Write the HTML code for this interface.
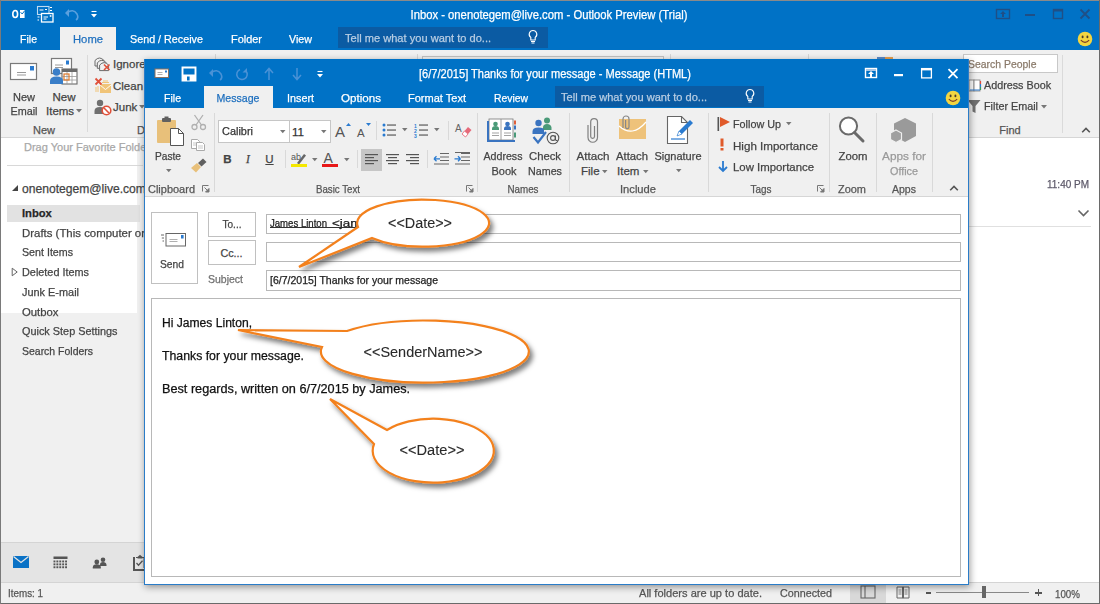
<!DOCTYPE html>
<html><head><meta charset="utf-8"><title>Outlook</title>
<style>
*{margin:0;padding:0;box-sizing:border-box}
html,body{width:1100px;height:604px;overflow:hidden}
body{position:relative;font-family:"Liberation Sans", sans-serif;background:#f0f0f0}
.a{position:absolute;white-space:nowrap;-webkit-text-stroke:0.25px currentColor}
svg.a{overflow:visible}
</style></head><body>
<div class="a" style="left:0px;top:0px;width:1100px;height:604px;background:#f0f0f0"></div>
<div class="a" style="left:1px;top:1px;width:1098px;height:49px;background:#0072c6"></div>
<div class="a" style="left:0px;top:0px;width:1100px;height:1px;background:#8a8a8a"></div>
<div class="a" style="left:0px;top:603px;width:1100px;height:1px;background:#6a6a6a"></div>
<div class="a" style="left:0px;top:0px;width:1px;height:604px;background:#7a7a7a"></div>
<div class="a" style="left:1099px;top:0px;width:1px;height:604px;background:#6a6a6a"></div>
<svg class="a" style="left:10px;top:8px;" width="17" height="12" viewBox="0 0 17 12"><ellipse cx="5.2" cy="6" rx="2.4" ry="3.5" fill="none" stroke="#fff" stroke-width="1.6"/><rect x="10" y="2" width="4.6" height="8" fill="#fff"/><path d="M10.6 4.2l1.6 1.8l2.4-3.2" fill="none" stroke="#0072c6" stroke-width="1"/></svg>
<svg class="a" style="left:36px;top:5px;" width="18" height="18" viewBox="0 0 18 18"><g fill="none" stroke="#fff"><rect x="1.5" y="1.5" width="11.5" height="8" stroke-opacity=".75" stroke-width="1.1"/><rect x="5.5" y="8.5" width="11.5" height="8.5" fill="#0072c6" stroke-width="1.3"/><path d="M3.5 5h4M9 4.5h2M7.5 12h4.5M7.5 14h3" stroke-width="1"/></g><path d="M14 2.5h2M14 5.5h2M1.5 12h2M1.5 15h1.5" stroke="#fff" stroke-width="1.2"/><rect x="13.8" y="10.2" width="1.6" height="1.6" fill="#fff"/></svg>
<svg class="a" style="left:64px;top:7px;" width="16" height="14" viewBox="0 0 16 14"><path d="M3 6 q6 -5 10 1 q2 4 -1 6" fill="none" stroke="#5aa0de" stroke-width="1.6"/><path d="M1 6 l4 -4 v8z" fill="#5aa0de"/></svg>
<svg class="a" style="left:90px;top:9px;" width="8" height="10" viewBox="0 0 8 10"><path d="M1.5 2.5h5" stroke="#fff" stroke-width="1.1"/><path d="M1 5h6l-3 3.5z" fill="#fff"/></svg>
<div class="a" style="left:348.5px;width:400px;text-align:center;top:8.80px;font-size:12px;line-height:12px;color:#fff;transform:scaleX(0.938);transform-origin:50% 0;">Inbox - onenotegem@live.com - Outlook Preview (Trial)</div>
<svg class="a" style="left:995px;top:8px;" width="16" height="12" viewBox="0 0 16 12"><rect x="1.5" y="1.5" width="13" height="9" fill="none" stroke="#1f4f86" stroke-width="1.4"/><path d="M8 3l-3 3h2v3h2v-3h2z" fill="#1f4f86"/></svg>
<svg class="a" style="left:1024px;top:13px;" width="12" height="4" viewBox="0 0 12 4"><rect x="1" y="1" width="10" height="2" fill="#1f4f86"/></svg>
<svg class="a" style="left:1052px;top:8px;" width="12" height="12" viewBox="0 0 12 12"><rect x="1.5" y="1.5" width="9" height="9" fill="none" stroke="#1f4f86" stroke-width="1.4"/><rect x="1" y="1" width="10" height="2.5" fill="#1f4f86"/></svg>
<svg class="a" style="left:1079px;top:8px;" width="12" height="12" viewBox="0 0 12 12"><path d="M1.5 1.5l9 9M10.5 1.5l-9 9" stroke="#1f4f86" stroke-width="1.8"/></svg>
<div class="a" style="left:20px;top:33.90px;font-size:11.8px;line-height:11.8px;color:#fff;transform:scaleX(0.894);transform-origin:0 0;">File</div>
<div class="a" style="left:60px;top:27px;width:56px;height:23px;background:#f0f0f0"></div>
<div class="a" style="left:-112px;width:400px;text-align:center;top:33.90px;font-size:11.8px;line-height:11.8px;color:#1e6fbe;transform:scaleX(0.953);transform-origin:50% 0;">Home</div>
<div class="a" style="left:130px;top:33.90px;font-size:11.8px;line-height:11.8px;color:#fff;transform:scaleX(0.912);transform-origin:0 0;">Send / Receive</div>
<div class="a" style="left:231px;top:33.90px;font-size:11.8px;line-height:11.8px;color:#fff;transform:scaleX(0.927);transform-origin:0 0;">Folder</div>
<div class="a" style="left:289px;top:33.90px;font-size:11.8px;line-height:11.8px;color:#fff;transform:scaleX(0.907);transform-origin:0 0;">View</div>
<div class="a" style="left:338px;top:27px;width:210px;height:21px;background:#0b5ba3"></div>
<div class="a" style="left:345px;top:33.05px;font-size:11.5px;line-height:11.5px;color:#b8cde3;transform:scaleX(0.964);transform-origin:0 0;">Tell me what you want to do...</div>
<svg class="a" style="left:528px;top:29px;" width="10" height="16" viewBox="0 0 10 16"><path d="M5 1.5a3.8 3.8 0 0 0-2.2 6.9v2.6h4.4v-2.6A3.8 3.8 0 0 0 5 1.5z" fill="none" stroke="#fff" stroke-width="1.1"/><path d="M3 12.5h4M3.5 14h3" stroke="#fff" stroke-width="1"/></svg>
<svg class="a" style="left:1077px;top:31px;" width="16" height="16" viewBox="0 0 16 16"><circle cx="8" cy="8" r="7.3" fill="#f3d540"/><ellipse cx="5.6" cy="5.9" rx="0.95" ry="1.3" fill="#4a3a2a"/><ellipse cx="10.4" cy="5.9" rx="0.95" ry="1.3" fill="#4a3a2a"/><path d="M3.8 9.2q4.2 4.2 8.4 0" fill="none" stroke="#7a3a2a" stroke-width="1.1"/></svg>
<div class="a" style="left:1px;top:50px;width:1098px;height:87px;background:#f0f0f0"></div>
<div class="a" style="left:1px;top:137px;width:1098px;height:1px;background:#d6d6d6"></div>
<svg class="a" style="left:9px;top:62px;" width="30" height="19" viewBox="0 0 30 19"><rect x="1.5" y="1.5" width="26" height="16" fill="#fff" stroke="#7a7a7a" stroke-width="1.2"/><rect x="21" y="4" width="4" height="4.5" fill="#2a7bd0"/><path d="M8 10.5h9M8 13h9" stroke="#9a9a9a" stroke-width="1"/></svg>
<div class="a" style="left:-176px;width:400px;text-align:center;top:92.05px;font-size:11.5px;line-height:11.5px;color:#444444;transform:scaleX(0.956);transform-origin:50% 0;">New</div>
<div class="a" style="left:-176px;width:400px;text-align:center;top:106.05px;font-size:11.5px;line-height:11.5px;color:#444444;transform:scaleX(0.939);transform-origin:50% 0;">Email</div>
<svg class="a" style="left:49px;top:57px;" width="30" height="29" viewBox="0 0 30 29"><rect x="2.5" y="1.5" width="20" height="15" fill="#fff" stroke="#7a7a7a" stroke-width="1.2"/><rect x="17" y="3.5" width="3" height="4" fill="#2a7bd0"/><path d="M6 8h8M6 10.5h8" stroke="#9a9a9a"/><rect x="13" y="12" width="15" height="15" fill="#fff" stroke="#6a6a6a" stroke-width="1.1"/><rect x="13" y="12" width="15" height="3" fill="#6a6a6a"/><path d="M13 19.5h15M13 23h15M18 15v12M23 15v12" stroke="#999" stroke-width=".8"/><rect x="15" y="17" width="5" height="6" fill="none" stroke="#e07a2a" stroke-width="1.2"/><circle cx="7.5" cy="15" r="3.8" fill="#3a7ec8"/><path d="M1 27v-3q0-4.5 6.5-4.5t6.5 4.5v3z" fill="#3a7ec8"/></svg>
<div class="a" style="left:-136px;width:400px;text-align:center;top:92.05px;font-size:11.5px;line-height:11.5px;color:#444444;transform-origin:50% 0;">New</div>
<div class="a" style="left:46px;top:106.05px;font-size:11.5px;line-height:11.5px;color:#444444;transform-origin:0 0;">Items</div>
<svg class="a" style="left:76px;top:109px;" width="6" height="4" viewBox="0 0 6 4"><path d="M0 0h6l-3 3.5z" fill="#777"/></svg>
<div class="a" style="left:-156px;width:400px;text-align:center;top:125.30px;font-size:11px;line-height:11px;color:#555;transform-origin:50% 0;">New</div>
<div class="a" style="left:87px;top:55px;width:1px;height:77px;background:#dadada"></div>
<svg class="a" style="left:94px;top:55px;" width="18" height="17" viewBox="0 0 18 17"><path d="M1.0 11.0V5.5Q5.5 0.5 10.0 5.5V11.0z" fill="#f0f0f0" stroke="#6a6a6a" stroke-width="1"/><path d="M3.3 13.3V7.8Q7.8 2.8 12.3 7.8V13.3z" fill="#f0f0f0" stroke="#6a6a6a" stroke-width="1"/><path d="M5.6 15.6V10.1Q10.1 5.1 14.6 10.1V15.6z" fill="#f0f0f0" stroke="#6a6a6a" stroke-width="1"/><path d="M10 9.5l5.5 5.5M15.5 9.5l-5.5 5.5" stroke="#e0503a" stroke-width="1.6"/></svg>
<div class="a" style="left:113px;top:59.05px;font-size:11.5px;line-height:11.5px;color:#444444;transform-origin:0 0;">Ignore</div>
<svg class="a" style="left:94px;top:77px;" width="18" height="18" viewBox="0 0 18 18"><rect x="6" y="7" width="11" height="9" fill="#f0c478"/><path d="M6 8l5.5 4.5l5.5-4.5" fill="none" stroke="#fff" stroke-width=".9"/><path d="M8 5.5h7M9 4h5" stroke="#f0c478" stroke-width="1"/><path d="M1.5 1.5l6 6M7.5 1.5l-6 6" stroke="#e0503a" stroke-width="1.8"/><path d="M2 10v5M4 9v6" stroke="#f0c478" stroke-width="1"/></svg>
<div class="a" style="left:113px;top:81.05px;font-size:11.5px;line-height:11.5px;color:#444444;transform-origin:0 0;">Clean</div>
<svg class="a" style="left:94px;top:99px;" width="18" height="17" viewBox="0 0 18 17"><circle cx="6" cy="4" r="3.2" fill="#707070"/><path d="M0.5 15v-3q0-4 5.5-4t5.5 4v3z" fill="#707070"/><circle cx="12.5" cy="11.5" r="4.3" fill="#fff" stroke="#e0503a" stroke-width="1.6"/><path d="M9.8 8.8l5.4 5.4" stroke="#e0503a" stroke-width="1.6"/></svg>
<div class="a" style="left:113px;top:102.05px;font-size:11.5px;line-height:11.5px;color:#444444;transform-origin:0 0;">Junk</div>
<svg class="a" style="left:139px;top:105px;" width="6" height="4" viewBox="0 0 6 4"><path d="M0 0h6l-3 3.5z" fill="#777"/></svg>
<div class="a" style="left:137px;top:125.30px;font-size:11px;line-height:11px;color:#555;transform-origin:0 0;">D</div>
<div class="a" style="left:422px;top:56px;width:242px;height:1px;background:#c2c2c2"></div>
<div class="a" style="left:422px;top:56px;width:1px;height:4px;background:#c2c2c2"></div>
<div class="a" style="left:663px;top:56px;width:1px;height:4px;background:#c2c2c2"></div>
<div class="a" style="left:215px;top:54px;width:1px;height:6px;background:#d6d6d6"></div>
<div class="a" style="left:417px;top:54px;width:1px;height:6px;background:#d6d6d6"></div>
<div class="a" style="left:670px;top:54px;width:1px;height:6px;background:#d6d6d6"></div>
<div class="a" style="left:808px;top:54px;width:1px;height:6px;background:#d6d6d6"></div>
<div class="a" style="left:877px;top:57px;width:8px;height:3px;background:#5a8ac8"></div>
<div class="a" style="left:885px;top:57px;width:8px;height:3px;background:#e8a050"></div>
<div class="a" style="left:963px;top:54px;width:95px;height:19px;background:#fff;border:1px solid #c8c8c8"></div>
<div class="a" style="left:967.5px;top:58.70px;font-size:11.2px;line-height:11.2px;color:#8a7a6a;transform:scaleX(0.933);transform-origin:0 0;">Search People</div>
<svg class="a" style="left:968px;top:79px;" width="14" height="13" viewBox="0 0 14 13"><rect x="1" y="1" width="5" height="11" fill="#fff" stroke="#888" stroke-width=".9"/><rect x="6" y="1" width="6" height="11" fill="#fff" stroke="#888" stroke-width=".9"/><path d="M12.5 2v3" stroke="#e04a3a" stroke-width="1.2"/><path d="M12.5 5v3" stroke="#2a7bd0" stroke-width="1.2"/><path d="M12.5 8v3" stroke="#3a9a5a" stroke-width="1.2"/><path d="M2 11h10" stroke="#2a7bd0"/></svg>
<div class="a" style="left:984px;top:80.05px;font-size:11.5px;line-height:11.5px;color:#444444;transform:scaleX(0.936);transform-origin:0 0;">Address Book</div>
<svg class="a" style="left:967px;top:99px;" width="14" height="15" viewBox="0 0 14 15"><path d="M0.5 1h13l-5 6v7l-3-1.5v-5.5z" fill="#707070"/></svg>
<div class="a" style="left:984px;top:101.05px;font-size:11.5px;line-height:11.5px;color:#444444;transform:scaleX(0.939);transform-origin:0 0;">Filter Email</div>
<svg class="a" style="left:1040.5px;top:105px;" width="6" height="4" viewBox="0 0 6 4"><path d="M0 0h6l-3 3.5z" fill="#777"/></svg>
<div class="a" style="left:810px;width:400px;text-align:center;top:125.30px;font-size:11px;line-height:11px;color:#555;transform-origin:50% 0;">Find</div>
<div class="a" style="left:1062px;top:55px;width:1px;height:78px;background:#dadada"></div>
<svg class="a" style="left:1081px;top:126px;" width="10" height="8" viewBox="0 0 10 8"><path d="M1.2 6.2l3.8-3.8l3.8 3.8" fill="none" stroke="#555" stroke-width="1.6"/></svg>
<div class="a" style="left:1px;top:138px;width:143px;height:404px;background:#f0f0f0"></div>
<div class="a" style="left:1px;top:138px;width:136px;height:175px;background:#fff"></div>
<div class="a" style="left:24px;top:142.30px;font-size:11px;line-height:11px;color:#a8a8a8;transform-origin:0 0;">Drag Your Favorite Folders Here</div>
<div class="a" style="left:7px;top:165px;width:136px;height:1px;background:#d8d8d8"></div>
<svg class="a" style="left:11px;top:184px;" width="8" height="8" viewBox="0 0 8 8"><path d="M7 1v6h-6z" fill="#444"/></svg>
<div class="a" style="left:22px;top:183.25px;font-size:12.1px;line-height:12.1px;color:#444444;transform-origin:0 0;">onenotegem@live.com</div>
<div class="a" style="left:7px;top:205px;width:133px;height:17px;background:#e2e2e2"></div>
<div class="a" style="left:22px;top:208.00px;font-size:11.2px;line-height:11.2px;color:#262626;transform-origin:0 0;font-weight:bold">Inbox</div>
<div class="a" style="left:22px;top:227.70px;font-size:11.2px;line-height:11.2px;color:#444444;transform:scaleX(1.02);transform-origin:0 0;">Drafts (This computer only)</div>
<div class="a" style="left:22px;top:247.45px;font-size:11.2px;line-height:11.2px;color:#444444;transform:scaleX(0.954);transform-origin:0 0;">Sent Items</div>
<div class="a" style="left:22px;top:267.20px;font-size:11.2px;line-height:11.2px;color:#444444;transform:scaleX(0.971);transform-origin:0 0;">Deleted Items</div>
<div class="a" style="left:22px;top:286.95px;font-size:11.2px;line-height:11.2px;color:#444444;transform:scaleX(0.975);transform-origin:0 0;">Junk E-mail</div>
<div class="a" style="left:22px;top:306.70px;font-size:11.2px;line-height:11.2px;color:#444444;transform:scaleX(1.012);transform-origin:0 0;">Outbox</div>
<div class="a" style="left:22px;top:326.45px;font-size:11.2px;line-height:11.2px;color:#444444;transform:scaleX(0.972);transform-origin:0 0;">Quick Step Settings</div>
<div class="a" style="left:22px;top:346.20px;font-size:11.2px;line-height:11.2px;color:#444444;transform:scaleX(0.936);transform-origin:0 0;">Search Folders</div>
<svg class="a" style="left:11px;top:267px;" width="7" height="10" viewBox="0 0 7 10"><path d="M1.2 1.2v7.6l5-3.8z" fill="none" stroke="#666" stroke-width="1"/></svg>
<div class="a" style="left:1px;top:542px;width:143px;height:1px;background:#d4d4d4"></div>
<div class="a" style="left:1px;top:543px;width:143px;height:39px;background:#e4e4e4"></div>
<div class="a" style="left:1px;top:582px;width:1098px;height:1px;background:#d4d4d4"></div>
<svg class="a" style="left:13px;top:555px;" width="16" height="14" viewBox="0 0 16 14"><rect x="0" y="1" width="16" height="12" fill="#0a72c6"/><path d="M0.5 1.5l7.5 6l7.5-6" fill="none" stroke="#e4e4e4" stroke-width="1.3"/></svg>
<svg class="a" style="left:53px;top:556px;" width="15" height="13" viewBox="0 0 15 13"><rect x="0.5" y="0.5" width="14" height="2.5" fill="#555"/><rect x="0.5" y="4.5" width="1.9" height="1.9" fill="#555"/><rect x="3.4" y="4.5" width="1.9" height="1.9" fill="#555"/><rect x="6.3" y="4.5" width="1.9" height="1.9" fill="#555"/><rect x="9.2" y="4.5" width="1.9" height="1.9" fill="#555"/><rect x="12.1" y="4.5" width="1.9" height="1.9" fill="#555"/><rect x="0.5" y="7.4" width="1.9" height="1.9" fill="#555"/><rect x="3.4" y="7.4" width="1.9" height="1.9" fill="#555"/><rect x="6.3" y="7.4" width="1.9" height="1.9" fill="#555"/><rect x="9.2" y="7.4" width="1.9" height="1.9" fill="#555"/><rect x="12.1" y="7.4" width="1.9" height="1.9" fill="#555"/><rect x="0.5" y="10.3" width="1.9" height="1.9" fill="#555"/><rect x="3.4" y="10.3" width="1.9" height="1.9" fill="#555"/><rect x="6.3" y="10.3" width="1.9" height="1.9" fill="#555"/><rect x="9.2" y="10.3" width="1.9" height="1.9" fill="#555"/><rect x="12.1" y="10.3" width="1.9" height="1.9" fill="#555"/></svg>
<svg class="a" style="left:92px;top:556px;" width="15" height="13" viewBox="0 0 15 13"><circle cx="4.8" cy="6" r="2.4" fill="#555"/><path d="M0.8 12.5v-1.2q0-3 4-3t4 3v1.2z" fill="#555"/><circle cx="11" cy="3.8" r="2.3" fill="#555"/><path d="M8 10v-1.2q0-2.8 3-2.8t3.5 2.8v1.2z" fill="#555"/></svg>
<svg class="a" style="left:132px;top:554px;" width="13" height="17" viewBox="0 0 13 17"><path d="M2 3v13h11" fill="none" stroke="#555" stroke-width="2"/><path d="M4 3.5h8v10.5" fill="none" stroke="#555" stroke-width="1"/><path d="M5.5 3l2.5-2.2l2.5 2.2v1.5h-5z" fill="#555"/><path d="M4.5 9l2 2.2l4-4.5" fill="none" stroke="#555" stroke-width="1.3"/></svg>
<div class="a" style="left:1px;top:583px;width:1098px;height:20px;background:#f0f0f0"></div>
<div class="a" style="left:8px;top:587.75px;font-size:10.5px;line-height:10.5px;color:#555;transform:scaleX(0.937);transform-origin:0 0;">Items: 1</div>
<div class="a" style="left:638.5px;top:588.20px;font-size:11.2px;line-height:11.2px;color:#555;transform:scaleX(0.989);transform-origin:0 0;">All folders are up to date.</div>
<div class="a" style="left:780px;top:588.20px;font-size:11.2px;line-height:11.2px;color:#555;transform:scaleX(0.961);transform-origin:0 0;">Connected</div>
<div class="a" style="left:850px;top:583px;width:36px;height:20px;background:#d8d8d8"></div>
<svg class="a" style="left:860px;top:585px;" width="16" height="14" viewBox="0 0 16 14"><rect x="1" y="1" width="14" height="12" fill="none" stroke="#666" stroke-width="1.1"/><path d="M5 1v12" stroke="#666" stroke-width="1.1"/></svg>
<svg class="a" style="left:896px;top:585px;" width="14" height="14" viewBox="0 0 14 14"><path d="M1 2h5.5v11h-5.5zM7.5 2h5.5v11h-5.5z" fill="none" stroke="#666" stroke-width="1"/><path d="M2.5 5h3M2.5 7h3M2.5 9h3M8.5 5h3M8.5 7h3M8.5 9h3M7 1v13" stroke="#666" stroke-width=".8"/></svg>
<div class="a" style="left:926px;top:592px;width:5px;height:2px;background:#555"></div>
<div class="a" style="left:936px;top:592px;width:93px;height:1px;background:#888"></div>
<div class="a" style="left:982px;top:586px;width:4px;height:12px;background:#666"></div>
<div class="a" style="left:1035px;top:592px;width:7px;height:1.5px;background:#555"></div>
<div class="a" style="left:1037.8px;top:589px;width:1.5px;height:7px;background:#555"></div>
<div class="a" style="left:1055px;top:588.55px;font-size:10.5px;line-height:10.5px;color:#555;transform:scaleX(0.931);transform-origin:0 0;">100%</div>
<div class="a" style="left:969px;top:138px;width:130px;height:444px;background:#fff"></div>
<div class="a" style="left:689px;width:400px;text-align:right;top:179.05px;font-size:10.5px;line-height:10.5px;color:#5e5a6a;transform:scaleX(0.951);transform-origin:100% 0;">11:40 PM</div>
<svg class="a" style="left:1077px;top:209px;" width="13" height="9" viewBox="0 0 13 9"><path d="M1.5 1.5l5 5l5-5" fill="none" stroke="#666" stroke-width="1.6"/></svg>
<div class="a" style="left:969px;top:226px;width:122px;height:1px;background:#e0e0e0"></div>
<div class="a" style="left:144px;top:59px;width:825px;height:526px;background:#fff;box-shadow:1px 2px 7px rgba(0,0,0,0.4)"></div>
<div class="a" style="left:144px;top:59px;width:825px;height:49px;background:#0072c6"></div>
<div class="a" style="left:144px;top:59px;width:1px;height:526px;background:#2a7cc8"></div>
<div class="a" style="left:968px;top:59px;width:1px;height:526px;background:#2a7cc8"></div>
<div class="a" style="left:144px;top:584px;width:825px;height:1px;background:#2a7cc8"></div>
<svg class="a" style="left:154px;top:68px;" width="16" height="11" viewBox="0 0 16 11"><rect x="1" y="1" width="13.5" height="8.5" fill="#fff" stroke="#8a7060" stroke-width="1"/><path d="M3.5 4.5h5M3.5 6.5h5" stroke="#999" stroke-width=".8"/><rect x="11" y="2.5" width="2" height="2" fill="#2a7bd0"/></svg>
<svg class="a" style="left:181px;top:66px;" width="16" height="16" viewBox="0 0 16 16"><path d="M1.5 1.5h13v13h-13z" fill="none" stroke="#fff" stroke-width="1.9"/><rect x="2" y="8.5" width="12" height="6" fill="#fff"/><rect x="6" y="10.5" width="2.6" height="4" fill="#0072c6"/></svg>
<svg class="a" style="left:208px;top:67px;" width="16" height="14" viewBox="0 0 16 14"><path d="M3 6 q6 -5 10 1 q2 4 -1 6" fill="none" stroke="#4a92d6" stroke-width="1.6"/><path d="M1 6 l4 -4 v8z" fill="#4a92d6"/></svg>
<svg class="a" style="left:235px;top:67px;" width="15" height="14" viewBox="0 0 15 14"><path d="M11 4a5.2 5.2 0 1 1-6-1.5" fill="none" stroke="#4a92d6" stroke-width="1.5"/><path d="M12 1v4.5h-4.5z" fill="#4a92d6"/></svg>
<svg class="a" style="left:264px;top:67px;" width="10" height="14" viewBox="0 0 10 14"><path d="M5 13V2M1 6l4-4.5l4 4.5" fill="none" stroke="#4a92d6" stroke-width="1.5"/></svg>
<svg class="a" style="left:292px;top:67px;" width="10" height="14" viewBox="0 0 10 14"><path d="M5 1v11M1 8l4 4.5l4-4.5" fill="none" stroke="#4a92d6" stroke-width="1.5"/></svg>
<svg class="a" style="left:316px;top:69px;" width="8" height="10" viewBox="0 0 8 10"><path d="M1.5 2.5h5" stroke="#fff" stroke-width="1.1"/><path d="M1 5h6l-3 3.5z" fill="#fff"/></svg>
<div class="a" style="left:354.5px;width:400px;text-align:center;top:68.30px;font-size:12px;line-height:12px;color:#fff;transform:scaleX(0.921);transform-origin:50% 0;">[6/7/2015] Thanks for your message - Message (HTML)</div>
<svg class="a" style="left:864px;top:67px;" width="14" height="12" viewBox="0 0 14 12"><rect x="1.5" y="1.5" width="11" height="9" fill="none" stroke="#fff" stroke-width="1.4"/><rect x="2" y="2" width="10" height="2" fill="#a8c8e8"/><path d="M7 4l-3 3h2v3h2v-3h2z" fill="#fff"/></svg>
<svg class="a" style="left:893px;top:73px;" width="12" height="4" viewBox="0 0 12 4"><rect x="1" y="1" width="9" height="2.2" fill="#fff"/></svg>
<svg class="a" style="left:920px;top:67px;" width="13" height="12" viewBox="0 0 13 12"><rect x="1.6" y="1.6" width="9.8" height="9.3" fill="none" stroke="#fff" stroke-width="1.3"/><rect x="1" y="1" width="11" height="2.4" fill="#fff"/></svg>
<svg class="a" style="left:947px;top:68px;" width="12" height="11" viewBox="0 0 12 11"><path d="M1.5 1.2l9 9M10.5 1.2l-9 9" stroke="#fff" stroke-width="1.8"/></svg>
<svg class="a" style="left:945px;top:90px;" width="16" height="16" viewBox="0 0 16 16"><circle cx="8" cy="8" r="7.3" fill="#f3d540"/><ellipse cx="5.6" cy="5.9" rx="0.95" ry="1.3" fill="#4a3a2a"/><ellipse cx="10.4" cy="5.9" rx="0.95" ry="1.3" fill="#4a3a2a"/><path d="M3.8 9.2q4.2 4.2 8.4 0" fill="none" stroke="#7a3a2a" stroke-width="1.1"/></svg>
<div class="a" style="left:164px;top:92.90px;font-size:11.8px;line-height:11.8px;color:#fff;transform:scaleX(0.894);transform-origin:0 0;">File</div>
<div class="a" style="left:204px;top:86px;width:69px;height:22px;background:#f0f0f0"></div>
<div class="a" style="left:37.5px;width:400px;text-align:center;top:92.90px;font-size:11.8px;line-height:11.8px;color:#1e6fbe;transform:scaleX(0.898);transform-origin:50% 0;">Message</div>
<div class="a" style="left:287px;top:92.90px;font-size:11.8px;line-height:11.8px;color:#fff;transform:scaleX(0.915);transform-origin:0 0;">Insert</div>
<div class="a" style="left:341px;top:92.90px;font-size:11.8px;line-height:11.8px;color:#fff;transform:scaleX(0.984);transform-origin:0 0;">Options</div>
<div class="a" style="left:408px;top:92.90px;font-size:11.8px;line-height:11.8px;color:#fff;transform:scaleX(0.935);transform-origin:0 0;">Format Text</div>
<div class="a" style="left:494px;top:92.90px;font-size:11.8px;line-height:11.8px;color:#fff;transform:scaleX(0.879);transform-origin:0 0;">Review</div>
<div class="a" style="left:555px;top:86px;width:209px;height:21px;background:#0b5ba3"></div>
<div class="a" style="left:561px;top:92.05px;font-size:11.5px;line-height:11.5px;color:#b8cde3;transform:scaleX(0.964);transform-origin:0 0;">Tell me what you want to do...</div>
<svg class="a" style="left:745px;top:88px;" width="10" height="16" viewBox="0 0 10 16"><path d="M5 1.5a3.8 3.8 0 0 0-2.2 6.9v2.6h4.4v-2.6A3.8 3.8 0 0 0 5 1.5z" fill="none" stroke="#fff" stroke-width="1.1"/><path d="M3 12.5h4M3.5 14h3" stroke="#fff" stroke-width="1"/></svg>
<div class="a" style="left:145px;top:108px;width:823px;height:88px;background:#f0f0f0"></div>
<div class="a" style="left:145px;top:196px;width:823px;height:1px;background:#d6d6d6"></div>
<svg class="a" style="left:156px;top:116px;" width="30" height="31" viewBox="0 0 30 31"><rect x="1" y="4" width="19" height="23" rx="1" fill="#e8c07a"/><rect x="6" y="2" width="9" height="4" rx="1" fill="#606060"/><rect x="8.5" y="0.5" width="4" height="3" fill="#606060"/><path d="M14.5 12.5h8l5 5v12h-13z" fill="#fff" stroke="#555" stroke-width="1"/><path d="M22.5 12.5v5h5" fill="none" stroke="#555" stroke-width="1"/></svg>
<div class="a" style="left:-32px;width:400px;text-align:center;top:151.05px;font-size:11.5px;line-height:11.5px;color:#444444;transform:scaleX(0.884);transform-origin:50% 0;">Paste</div>
<svg class="a" style="left:165.5px;top:168.5px;" width="6" height="4" viewBox="0 0 6 4"><path d="M0 0h5.5l-2.75 3.2z" fill="#777"/></svg>
<svg class="a" style="left:191px;top:114px;" width="16" height="17" viewBox="0 0 16 17"><circle cx="3.5" cy="13" r="2.5" fill="none" stroke="#b0b0b0" stroke-width="1.3"/><circle cx="12" cy="13" r="2.5" fill="none" stroke="#b0b0b0" stroke-width="1.3"/><path d="M5 11l7-10M10.5 11l-7-10" stroke="#b0b0b0" stroke-width="1.3"/></svg>
<svg class="a" style="left:190px;top:138px;" width="16" height="13" viewBox="0 0 16 13"><path d="M1.5 1.5h6l2 2v7h-8z" fill="#fff" stroke="#aaa"/><path d="M6.5 4.5h6l2 2v6h-8z" fill="#fff" stroke="#aaa"/><path d="M8 8h5M8 10h5M3 5h3M3 7h3" stroke="#bbb" stroke-width=".8"/></svg>
<svg class="a" style="left:190px;top:158px;" width="17" height="15" viewBox="0 0 17 15"><path d="M1 10l6-5l4 4l-5 5.5z" fill="#e8c07a"/><path d="M8 5l5-4.5l3.5 3.5l-5 4.5z" fill="#606060"/></svg>
<div class="a" style="left:148px;top:184.30px;font-size:11px;line-height:11px;color:#555;transform:scaleX(0.998);transform-origin:0 0;">Clipboard</div>
<svg class="a" style="left:202px;top:185px;" width="8" height="8" viewBox="0 0 8 8"><path d="M0.5 0.5h6M0.5 0.5v6" stroke="#777" stroke-width="1"/><path d="M2.5 2.5l4 4M7 3.5v3.5h-3.5z" stroke="#777" stroke-width="1" fill="#777"/></svg>
<div class="a" style="left:214px;top:113px;width:1px;height:79px;background:#d9d9d9"></div>
<div class="a" style="left:218px;top:120px;width:72px;height:23px;background:#fff;border:1px solid #c6c6c6"></div>
<div class="a" style="left:289px;top:120px;width:42px;height:23px;background:#fff;border:1px solid #c6c6c6"></div>
<div class="a" style="left:222px;top:125.30px;font-size:11.6px;line-height:11.6px;color:#333;transform:scaleX(0.943);transform-origin:0 0;">Calibri</div>
<svg class="a" style="left:280px;top:130px;" width="6" height="4" viewBox="0 0 6 4"><path d="M0 0h5.5l-2.75 3.2z" fill="#777"/></svg>
<div class="a" style="left:292px;top:126.00px;font-size:11.6px;line-height:11.6px;color:#333;transform-origin:0 0;">11</div>
<svg class="a" style="left:321px;top:130px;" width="6" height="4" viewBox="0 0 6 4"><path d="M0 0h5.5l-2.75 3.2z" fill="#777"/></svg>
<svg class="a" style="left:334px;top:121px;" width="17" height="17" viewBox="0 0 17 17"><text x="1" y="16" font-family="Liberation Sans" font-size="15" fill="#555">A</text><path d="M12 5h5l-2.5-3z" fill="#2a7bd0"/></svg>
<svg class="a" style="left:356px;top:121px;" width="16" height="17" viewBox="0 0 16 17"><text x="1" y="16" font-family="Liberation Sans" font-size="11.5" fill="#555">A</text><path d="M10 2h5l-2.5 3z" fill="#2a7bd0"/></svg>
<div class="a" style="left:376px;top:121px;width:1px;height:19px;background:#d9d9d9"></div>
<svg class="a" style="left:382px;top:123px;" width="15" height="15" viewBox="0 0 15 15"><circle cx="2" cy="2" r="1.5" fill="#2a7bd0"/><rect x="5" y="1.4" width="9" height="1.3" fill="#666"/><circle cx="2" cy="7" r="1.5" fill="#2a7bd0"/><rect x="5" y="6.4" width="9" height="1.3" fill="#666"/><circle cx="2" cy="12" r="1.5" fill="#2a7bd0"/><rect x="5" y="11.4" width="9" height="1.3" fill="#666"/></svg>
<svg class="a" style="left:402px;top:128px;" width="6" height="4" viewBox="0 0 6 4"><path d="M0 0h5.5l-2.75 3.2z" fill="#777"/></svg>
<svg class="a" style="left:414px;top:123px;" width="15" height="15" viewBox="0 0 15 15"><text x="0" y="4.5" font-family="Liberation Sans" font-size="5" fill="#2a7bd0" font-weight="bold">1</text><rect x="5" y="1.4" width="9" height="1.3" fill="#666"/><text x="0" y="9.5" font-family="Liberation Sans" font-size="5" fill="#2a7bd0" font-weight="bold">2</text><rect x="5" y="6.4" width="9" height="1.3" fill="#666"/><text x="0" y="14.5" font-family="Liberation Sans" font-size="5" fill="#2a7bd0" font-weight="bold">3</text><rect x="5" y="11.4" width="9" height="1.3" fill="#666"/></svg>
<svg class="a" style="left:434px;top:128px;" width="6" height="4" viewBox="0 0 6 4"><path d="M0 0h5.5l-2.75 3.2z" fill="#777"/></svg>
<div class="a" style="left:448px;top:121px;width:1px;height:19px;background:#d9d9d9"></div>
<svg class="a" style="left:455px;top:122px;" width="17" height="16" viewBox="0 0 17 16"><text x="0" y="10" font-family="Liberation Sans" font-size="10" fill="#666">A</text><path d="M7 12l6-7l3.5 3l-6 7z" fill="#e66a7a"/><path d="M7 12l2.5-3l3.5 3l-2.5 3z" fill="#fff" stroke="#e66a7a" stroke-width=".8"/></svg>
<div class="a" style="left:27.5px;width:400px;text-align:center;top:153.55px;font-size:11.5px;line-height:11.5px;color:#444;transform-origin:50% 0;font-weight:bold">B</div>
<div class="a" style="left:48px;width:400px;text-align:center;top:153.55px;font-size:11.5px;line-height:11.5px;color:#444;transform-origin:50% 0;font-style:italic;font-family:'Liberation Serif'">I</div>
<div class="a" style="left:69.5px;width:400px;text-align:center;top:153.55px;font-size:11.5px;line-height:11.5px;color:#444;transform-origin:50% 0;text-decoration:underline">U</div>
<div class="a" style="left:285px;top:150px;width:1px;height:18px;background:#d9d9d9"></div>
<svg class="a" style="left:290px;top:151px;" width="18" height="17" viewBox="0 0 18 17"><text x="1" y="9" font-family="Liberation Sans" font-size="9" fill="#555">ab</text><path d="M7 12l7-9l2 1.5l-7 9z" fill="#666"/><rect x="1" y="13" width="16" height="3" fill="#f5e800"/></svg>
<svg class="a" style="left:312px;top:158px;" width="6" height="4" viewBox="0 0 6 4"><path d="M0 0h5.5l-2.75 3.2z" fill="#777"/></svg>
<svg class="a" style="left:322px;top:151px;" width="17" height="17" viewBox="0 0 17 17"><text x="1.5" y="12" font-family="Liberation Sans" font-size="14" fill="#555">A</text><rect x="0" y="13" width="16" height="3" fill="#e81818"/></svg>
<svg class="a" style="left:344px;top:158px;" width="6" height="4" viewBox="0 0 6 4"><path d="M0 0h5.5l-2.75 3.2z" fill="#777"/></svg>
<div class="a" style="left:357px;top:150px;width:1px;height:18px;background:#d9d9d9"></div>
<div class="a" style="left:361px;top:149px;width:21px;height:22px;background:#c6c6c6"></div>
<svg class="a" style="left:365px;top:154px;" width="14" height="11" viewBox="0 0 14 11"><rect x="0" y="0" width="13" height="1.2" fill="#555"/><rect x="0" y="3" width="9" height="1.2" fill="#555"/><rect x="0" y="6" width="13" height="1.2" fill="#555"/><rect x="0" y="9" width="9" height="1.2" fill="#555"/></svg>
<svg class="a" style="left:386px;top:154px;" width="14" height="11" viewBox="0 0 14 11"><rect x="0.0" y="0" width="13" height="1.2" fill="#555"/><rect x="2.0" y="3" width="9" height="1.2" fill="#555"/><rect x="0.0" y="6" width="13" height="1.2" fill="#555"/><rect x="2.0" y="9" width="9" height="1.2" fill="#555"/></svg>
<svg class="a" style="left:406px;top:154px;" width="14" height="11" viewBox="0 0 14 11"><rect x="0" y="0" width="13" height="1.2" fill="#555"/><rect x="4" y="3" width="9" height="1.2" fill="#555"/><rect x="0" y="6" width="13" height="1.2" fill="#555"/><rect x="4" y="9" width="9" height="1.2" fill="#555"/></svg>
<div class="a" style="left:427px;top:150px;width:1px;height:18px;background:#d9d9d9"></div>
<svg class="a" style="left:433px;top:152px;" width="17" height="14" viewBox="0 0 17 14"><path d="M7 1.5h9M7 5h9M7 8.5h9M1 12h15" stroke="#666" stroke-width="1.2"/><path d="M1 6.8h6M1 6.8l2.5-2.5M1 6.8l2.5 2.5" stroke="#2a7bd0" stroke-width="1.3" fill="none"/></svg>
<svg class="a" style="left:454px;top:152px;" width="17" height="14" viewBox="0 0 17 14"><path d="M7 1.5h9M7 5h9M7 8.5h9M1 12h15M1 .5h15" stroke="#666" stroke-width="1.2"/><path d="M0.5 6.8h6M6.5 6.8l-2.5-2.5M6.5 6.8l-2.5 2.5" stroke="#2a7bd0" stroke-width="1.3" fill="none"/></svg>
<div class="a" style="left:316px;top:184.30px;font-size:11px;line-height:11px;color:#555;transform:scaleX(0.881);transform-origin:0 0;">Basic Text</div>
<svg class="a" style="left:466px;top:185px;" width="8" height="8" viewBox="0 0 8 8"><path d="M0.5 0.5h6M0.5 0.5v6" stroke="#777" stroke-width="1"/><path d="M2.5 2.5l4 4M7 3.5v3.5h-3.5z" stroke="#777" stroke-width="1" fill="#777"/></svg>
<div class="a" style="left:477px;top:113px;width:1px;height:79px;background:#d9d9d9"></div>
<svg class="a" style="left:487px;top:117px;" width="32" height="27" viewBox="0 0 32 27"><rect x="2" y="2" width="24" height="21" fill="#fff" stroke="#777" stroke-width=".8"/><path d="M14 2v21" stroke="#888" stroke-width=".8"/><path d="M1 4v20h27" fill="none" stroke="#3a74c0" stroke-width="2"/><circle cx="8.5" cy="7" r="2.3" fill="#4a9a78"/><path d="M5 13v-1.5q0-2.5 3.5-2.5t3.5 2.5v1.5z" fill="#4a9a78"/><circle cx="20.5" cy="7" r="2.3" fill="#3a74c0"/><path d="M17 13v-1.5q0-2.5 3.5-2.5t3.5 2.5v1.5z" fill="#3a74c0"/><path d="M5 16h7M5 18.5h7M17 16h7M17 18.5h7" stroke="#999" stroke-width=".9"/><rect x="27" y="3.5" width="2" height="4" fill="#e0603a"/><rect x="27" y="8.5" width="2" height="4" fill="#3a74c0"/><rect x="27" y="15.5" width="2" height="5" fill="#4a9a78"/></svg>
<div class="a" style="left:302.5px;width:400px;text-align:center;top:151.05px;font-size:11.5px;line-height:11.5px;color:#444444;transform:scaleX(0.924);transform-origin:50% 0;">Address</div>
<div class="a" style="left:303.5px;width:400px;text-align:center;top:166.05px;font-size:11.5px;line-height:11.5px;color:#444444;transform:scaleX(0.954);transform-origin:50% 0;">Book</div>
<svg class="a" style="left:531px;top:116px;" width="32" height="31" viewBox="0 0 32 31"><circle cx="16" cy="4.5" r="3" fill="#4a9a78"/><path d="M12 14v-2.5q0-3.5 4-3.5t4.5 3.5v2.5z" fill="#4a9a78"/><circle cx="7.5" cy="7" r="3.2" fill="#3a74c0"/><path d="M1.5 18v-2.5q0-4 6-4t5.5 3v3.5z" fill="#3a74c0"/><path d="M2.5 21l4.5 5.5l8-10.5" fill="none" stroke="#3a74c0" stroke-width="2.2"/><circle cx="22" cy="22" r="7.5" fill="#f0f0f0"/><circle cx="22" cy="22" r="5.8" fill="none" stroke="#555" stroke-width="1.1"/><circle cx="22" cy="22" r="2.4" fill="none" stroke="#555" stroke-width="1.1"/><path d="M24.4 19.5v3.5q0 2 2.2 1.2" fill="none" stroke="#555" stroke-width="1.1"/></svg>
<div class="a" style="left:345px;width:400px;text-align:center;top:151.05px;font-size:11.5px;line-height:11.5px;color:#444444;transform:scaleX(0.981);transform-origin:50% 0;">Check</div>
<div class="a" style="left:345px;width:400px;text-align:center;top:166.05px;font-size:11.5px;line-height:11.5px;color:#444444;transform:scaleX(0.933);transform-origin:50% 0;">Names</div>
<div class="a" style="left:322.5px;width:400px;text-align:center;top:184.30px;font-size:11px;line-height:11px;color:#555;transform:scaleX(0.890);transform-origin:50% 0;">Names</div>
<div class="a" style="left:569px;top:113px;width:1px;height:79px;background:#d9d9d9"></div>
<svg class="a" style="left:584px;top:116px;" width="17" height="29" viewBox="0 0 17 29"><path d="M4 9V21.5A4.75 4.75 0 0 0 13.5 21.5V6A3.4 3.4 0 0 0 6.7 6V20.5A1.9 1.9 0 0 0 10.5 20.5V10" fill="none" stroke="#808080" stroke-width="1.2"/></svg>
<div class="a" style="left:392.5px;width:400px;text-align:center;top:151.05px;font-size:11.5px;line-height:11.5px;color:#444444;transform:scaleX(1.012);transform-origin:50% 0;">Attach</div>
<div class="a" style="left:581px;top:166.05px;font-size:11.5px;line-height:11.5px;color:#444444;transform-origin:0 0;">File</div>
<svg class="a" style="left:601.5px;top:169.5px;" width="6" height="4" viewBox="0 0 6 4"><path d="M0 0h5.5l-2.75 3.2z" fill="#777"/></svg>
<svg class="a" style="left:618px;top:114px;" width="30" height="28" viewBox="0 0 30 28"><rect x="1" y="5" width="27" height="20" fill="#eec27a"/><path d="M1 12q13.5 12 27-4" fill="none" stroke="#fff" stroke-width="1.2"/><path d="M5 14v-9a3 3 0 0 1 6 0v8a1.7 1.7 0 0 1-3.4 0v-7" fill="none" stroke="#888" stroke-width="1.2"/></svg>
<div class="a" style="left:432px;width:400px;text-align:center;top:151.05px;font-size:11.5px;line-height:11.5px;color:#444444;transform:scaleX(0.981);transform-origin:50% 0;">Attach</div>
<div class="a" style="left:617px;top:166.05px;font-size:11.5px;line-height:11.5px;color:#444444;transform-origin:0 0;">Item</div>
<svg class="a" style="left:642.5px;top:169.5px;" width="6" height="4" viewBox="0 0 6 4"><path d="M0 0h5.5l-2.75 3.2z" fill="#777"/></svg>
<svg class="a" style="left:666px;top:115px;" width="29" height="31" viewBox="0 0 29 31"><path d="M1.5 1.5h14l6 6v21h-20z" fill="#fff" stroke="#666" stroke-width="1.1"/><path d="M15.5 1.5v6h6" fill="none" stroke="#666" stroke-width="1.1"/><path d="M5 24h14" stroke="#2a7bd0" stroke-width="1.2"/><path d="M11 21l2-5l11-11l3 3l-11 11z" fill="#2a7bd0"/><path d="M11 21l2-5l3 3z" fill="#fff" stroke="#2a7bd0" stroke-width=".6"/></svg>
<div class="a" style="left:477.5px;width:400px;text-align:center;top:151.05px;font-size:11.5px;line-height:11.5px;color:#444444;transform:scaleX(0.955);transform-origin:50% 0;">Signature</div>
<svg class="a" style="left:675.5px;top:168.5px;" width="6" height="4" viewBox="0 0 6 4"><path d="M0 0h5.5l-2.75 3.2z" fill="#777"/></svg>
<div class="a" style="left:438px;width:400px;text-align:center;top:184.30px;font-size:11px;line-height:11px;color:#555;transform:scaleX(1.015);transform-origin:50% 0;">Include</div>
<div class="a" style="left:708px;top:113px;width:1px;height:79px;background:#d9d9d9"></div>
<svg class="a" style="left:717px;top:116px;" width="14" height="16" viewBox="0 0 14 16"><rect x="0.5" y="1" width="1.6" height="14" fill="#555"/><path d="M3 1l10 5l-10 5z" fill="#e05a2a"/></svg>
<div class="a" style="left:733px;top:119.05px;font-size:11.5px;line-height:11.5px;color:#444444;transform:scaleX(0.939);transform-origin:0 0;">Follow Up</div>
<svg class="a" style="left:786px;top:122px;" width="6" height="4" viewBox="0 0 6 4"><path d="M0 0h5.5l-2.75 3.2z" fill="#777"/></svg>
<svg class="a" style="left:720px;top:138px;" width="5" height="13" viewBox="0 0 5 13"><rect x="0.5" y="0.5" width="3" height="8" fill="#e05a2a"/><rect x="0.5" y="10" width="3" height="2.5" fill="#e05a2a"/></svg>
<div class="a" style="left:733px;top:141.05px;font-size:11.5px;line-height:11.5px;color:#444444;transform:scaleX(1.007);transform-origin:0 0;">High Importance</div>
<svg class="a" style="left:718px;top:161px;" width="10" height="11" viewBox="0 0 10 11"><path d="M5 0v10M1 6l4 4l4-4" fill="none" stroke="#2a7bd0" stroke-width="1.8"/></svg>
<div class="a" style="left:733px;top:162.05px;font-size:11.5px;line-height:11.5px;color:#444444;transform:scaleX(0.990);transform-origin:0 0;">Low Importance</div>
<div class="a" style="left:560.5px;width:400px;text-align:center;top:184.30px;font-size:11px;line-height:11px;color:#555;transform:scaleX(0.903);transform-origin:50% 0;">Tags</div>
<svg class="a" style="left:817px;top:185px;" width="8" height="8" viewBox="0 0 8 8"><path d="M0.5 0.5h6M0.5 0.5v6" stroke="#777" stroke-width="1"/><path d="M2.5 2.5l4 4M7 3.5v3.5h-3.5z" stroke="#777" stroke-width="1" fill="#777"/></svg>
<div class="a" style="left:829px;top:113px;width:1px;height:79px;background:#d9d9d9"></div>
<svg class="a" style="left:838px;top:116px;" width="29" height="29" viewBox="0 0 29 29"><circle cx="10.5" cy="10" r="8.6" fill="#fff" stroke="#6a6a6a" stroke-width="2"/><path d="M16.5 16.5l8.5 8.5" stroke="#6a6a6a" stroke-width="3" stroke-linecap="round"/></svg>
<div class="a" style="left:652.5px;width:400px;text-align:center;top:151.05px;font-size:11.5px;line-height:11.5px;color:#444444;transform:scaleX(0.986);transform-origin:50% 0;">Zoom</div>
<div class="a" style="left:652px;width:400px;text-align:center;top:184.30px;font-size:11px;line-height:11px;color:#555;transform:scaleX(0.996);transform-origin:50% 0;">Zoom</div>
<div class="a" style="left:876px;top:113px;width:1px;height:79px;background:#d9d9d9"></div>
<svg class="a" style="left:890px;top:117px;" width="28" height="28" viewBox="0 0 28 28"><path d="M15 1L26 6.5V19L15 25L4 19V6.5z" fill="#9a9a9a"/><path d="M6 13L11.5 16V22.5L6 25.5L0.5 22.5V16z" fill="#a0a0a0" stroke="#f0f0f0" stroke-width="1.2"/></svg>
<div class="a" style="left:704px;width:400px;text-align:center;top:151.05px;font-size:11.5px;line-height:11.5px;color:#9a9a9a;transform:scaleX(1.027);transform-origin:50% 0;">Apps for</div>
<div class="a" style="left:704px;width:400px;text-align:center;top:166.05px;font-size:11.5px;line-height:11.5px;color:#9a9a9a;transform:scaleX(0.939);transform-origin:50% 0;">Office</div>
<div class="a" style="left:704px;width:400px;text-align:center;top:184.30px;font-size:11px;line-height:11px;color:#555;transform:scaleX(0.957);transform-origin:50% 0;">Apps</div>
<div class="a" style="left:932px;top:113px;width:1px;height:79px;background:#d9d9d9"></div>
<svg class="a" style="left:949px;top:184px;" width="10" height="8" viewBox="0 0 10 8"><path d="M1.2 6.2l3.8-3.8l3.8 3.8" fill="none" stroke="#555" stroke-width="1.6"/></svg>
<div class="a" style="left:151px;top:212px;width:47px;height:72px;background:#fff;border:1px solid #c0c0c0"></div>
<svg class="a" style="left:160px;top:231px;" width="28" height="16" viewBox="0 0 28 16"><path d="M1 4h3M1.8 7h2.2M2.5 10h1.5" stroke="#666" stroke-width="1"/><rect x="6" y="2.5" width="19.5" height="12.5" fill="#fff" stroke="#666" stroke-width="1"/><path d="M9.5 8.5h8M9.5 10.5h8" stroke="#b0b0b0" stroke-width="1"/><rect x="21" y="4" width="2.6" height="3.5" fill="#2a7bd0"/></svg>
<div class="a" style="left:-28px;width:400px;text-align:center;top:259.30px;font-size:11px;line-height:11px;color:#444444;transform:scaleX(0.934);transform-origin:50% 0;">Send</div>
<div class="a" style="left:208px;top:212px;width:48px;height:25px;background:#fff;border:1px solid #c0c0c0"></div>
<div class="a" style="left:31.5px;width:400px;text-align:center;top:219.40px;font-size:10.8px;line-height:10.8px;color:#444444;transform:scaleX(0.931);transform-origin:50% 0;">To...</div>
<div class="a" style="left:208px;top:240px;width:48px;height:25px;background:#fff;border:1px solid #c0c0c0"></div>
<div class="a" style="left:31.5px;width:400px;text-align:center;top:247.90px;font-size:10.8px;line-height:10.8px;color:#444444;transform-origin:50% 0;">Cc...</div>
<div class="a" style="left:208px;top:274.40px;font-size:10.8px;line-height:10.8px;color:#707070;transform:scaleX(0.972);transform-origin:0 0;">Subject</div>
<div class="a" style="left:266px;top:214px;width:695px;height:20px;background:#fff;border:1px solid #b8b8b8"></div>
<div class="a" style="left:266px;top:242px;width:695px;height:20px;background:#fff;border:1px solid #b8b8b8"></div>
<div class="a" style="left:266px;top:270px;width:695px;height:21px;background:#fff;border:1px solid #b8b8b8"></div>
<div class="a" style="left:270px;top:218.80px;font-size:10px;line-height:10px;color:#222;transform:scaleX(0.958);transform-origin:0 0;">James Linton</div>
<div class="a" style="left:331.5px;top:218.80px;font-size:10px;line-height:10px;color:#222;transform:scaleX(1.341);transform-origin:0 0;">&lt;james.linton@live.com&gt;</div>
<div class="a" style="left:270px;top:227px;width:110px;height:1px;background:#333"></div>
<div class="a" style="left:270px;top:275.60px;font-size:10.4px;line-height:10.4px;color:#222;transform:scaleX(1.011);transform-origin:0 0;">[6/7/2015] Thanks for your message</div>
<div class="a" style="left:151px;top:298px;width:810px;height:279px;background:#fff;border:1px solid #b8b8b8"></div>
<div class="a" style="left:162px;top:316.65px;font-size:12.3px;line-height:12.3px;color:#111;transform:scaleX(0.983);transform-origin:0 0;">Hi James Linton,</div>
<div class="a" style="left:162px;top:349.65px;font-size:12.3px;line-height:12.3px;color:#111;transform:scaleX(0.999);transform-origin:0 0;">Thanks for your message.</div>
<div class="a" style="left:162px;top:382.65px;font-size:12.3px;line-height:12.3px;color:#111;transform:scaleX(1.031);transform-origin:0 0;">Best regards, written on 6/7/2015 by James.</div>
<svg class="a" style="left:0px;top:0px;" width="1100" height="604" viewBox="0 0 1100 604"><defs><filter id="sh" x="-20%" y="-20%" width="150%" height="160%"><feDropShadow dx="3" dy="4" stdDeviation="2.8" flood-color="#000" flood-opacity="0.5"/></filter></defs><path d="M358 227L299 267L372 238A66 23.5 0 1 0 358 227Z" fill="#fff" stroke="#f3811f" stroke-width="2.2" stroke-linejoin="miter" filter="url(#sh)"/><path d="M347 331L238 330L322 347A104 31 0 1 0 347 331Z" fill="#fff" stroke="#f3811f" stroke-width="2.2" stroke-linejoin="miter" filter="url(#sh)"/><path d="M387 430L330 399L374 444A60.6 32 0 1 0 387 430Z" fill="#fff" stroke="#f3811f" stroke-width="2.2" stroke-linejoin="miter" filter="url(#sh)"/></svg>
<div class="a" style="left:220px;width:400px;text-align:center;top:215.20px;font-size:15.2px;line-height:15.2px;color:#2a2a2a;transform:scaleX(0.947);transform-origin:50% 0;-webkit-text-stroke:0.1px #2a2a2a">&lt;&lt;Date&gt;&gt;</div>
<div class="a" style="left:222.5px;width:400px;text-align:center;top:344.20px;font-size:15.2px;line-height:15.2px;color:#2a2a2a;transform:scaleX(0.952);transform-origin:50% 0;-webkit-text-stroke:0.1px #2a2a2a">&lt;&lt;SenderName&gt;&gt;</div>
<div class="a" style="left:231.5px;width:400px;text-align:center;top:442.20px;font-size:15.2px;line-height:15.2px;color:#2a2a2a;transform:scaleX(0.962);transform-origin:50% 0;-webkit-text-stroke:0.1px #2a2a2a">&lt;&lt;Date&gt;&gt;</div>
</body></html>
